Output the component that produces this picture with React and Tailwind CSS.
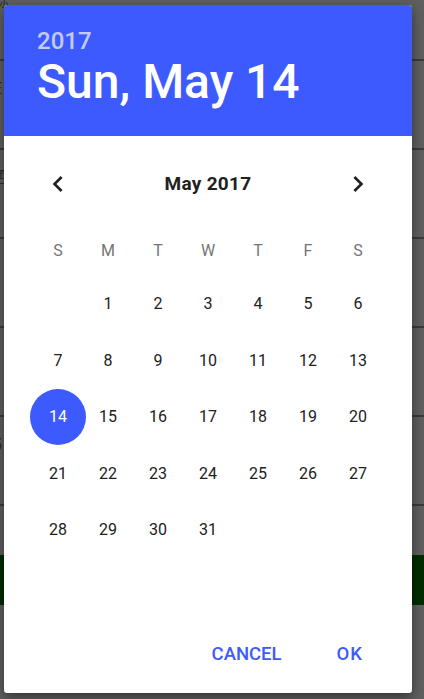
import React from "react";

const WEEKDAYS = ["S", "M", "T", "W", "T", "F", "S"];

// May 2017 starts on a Monday
const buildWeeks = () => {
  const cells = [null];
  for (let d = 1; d <= 31; d++) cells.push(d);
  const weeks = [];
  for (let i = 0; i < cells.length; i += 7) weeks.push(cells.slice(i, i + 7));
  return weeks;
};

function Chevron({ dir }) {
  const d =
    dir === "left"
      ? "M15.41 7.41L14 6l-6 6 6 6 1.41-1.41L10.83 12z"
      : "M8.59 16.59L10 18l6-6-6-6-1.41 1.41L13.17 12z";
  return (
    <svg width="32" height="32" viewBox="0 0 24 24" className="fill-[#212121]">
      <path d={d} />
    </svg>
  );
}

// the form sitting under the dim overlay
function Backdrop() {
  const rows = ["E", "否", "", "1", "5"];
  return (
    <div className="flex flex-col">
      <div className="h-[61px] border-b-2 border-[#3a3a3a] text-[15px] leading-[15px] text-[#2e2e2e]">
        <span className="block -ml-[6px] -mt-[6px]">标</span>
      </div>
      {rows.map((label, i) => (
        <div
          key={i}
          className="h-[89px] border-b-2 border-[#3a3a3a] pt-[19px] text-[16px] leading-[18px] text-[#2e2e2e]"
        >
          <span className="block -ml-[7px]">{label}</span>
        </div>
      ))}
      <div className="h-[49px]" />
      <div className="h-[50px] bg-[#002d00]" />
    </div>
  );
}

export default function App() {
  const weeks = buildWeeks();
  const selected = 14;

  return (
    <div
      className="relative w-[424px] h-[699px] bg-[#5f5f5f] overflow-hidden"
      style={{ fontFamily: "Roboto, 'Noto Sans CJK SC', sans-serif" }}
    >
      <Backdrop />

      <div className="absolute left-[4px] top-[5px] w-[408px] h-[688px] bg-white rounded-[3px] shadow-[0_4px_12px_rgba(0,0,0,0.45)] overflow-hidden flex flex-col">
        <div className="h-[131px] shrink-0 bg-[#3d5afe] pl-[33px] pt-[24px] text-white">
          <div className="text-[24px] leading-[24px] font-medium text-white/70">2017</div>
          <div className="mt-[4px] text-[48px] leading-[50px] font-medium">Sun, May 14</div>
        </div>

        <div className="flex items-center justify-between px-[38px] pt-[32px]">
          <Chevron dir="left" />
          <div className="text-[19px] font-bold tracking-[0.3px] text-[#212121]">May 2017</div>
          <Chevron dir="right" />
        </div>

        <div className="mx-auto w-[350px] mt-[41px] grid grid-cols-7">
          {WEEKDAYS.map((w, i) => (
            <div key={i} className="text-center text-[16px] leading-[20px] text-[#757575]">
              {w}
            </div>
          ))}
        </div>

        <div className="mx-auto w-[350px] mt-[15px] flex flex-col">
          {weeks.map((week, wi) => (
            <div key={wi} className="grid grid-cols-7 h-[56.5px]">
              {Array.from({ length: 7 }).map((_, di) => {
                const day = week[di];
                const isSel = day === selected;
                return (
                  <div key={di} className="flex items-center justify-center">
                    {day && (
                      <div
                        className={`w-[56px] h-[56px] shrink-0 rounded-full flex items-center justify-center text-[16px] ${
                          isSel ? "bg-[#3d5afe] text-white" : "text-[#212121]"
                        }`}
                      >
                        {day}
                      </div>
                    )}
                  </div>
                );
              })}
            </div>
          ))}
        </div>

        <div className="mt-auto flex justify-end items-center gap-[55px] pr-[49px] pb-[24px] text-[18.5px] font-medium text-[#3d5afe]">
          <span>CANCEL</span>
          <span className="tracking-[1px]">OK</span>
        </div>
      </div>
    </div>
  );
}
